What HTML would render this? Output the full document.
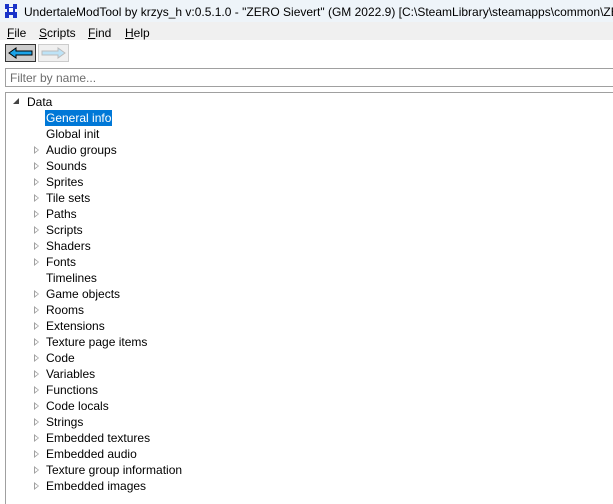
<!DOCTYPE html>
<html><head><style>
body{margin:0;width:613px;height:503px;overflow:hidden;background:#fff;font-family:"Liberation Sans",sans-serif;font-size:12px;color:#000;position:relative}
.abs{position:absolute}
#title{left:0;top:0;width:613px;height:22px;background:#eef4f9;overflow:hidden}
#title span{position:absolute;left:24px;top:5px;white-space:nowrap;font-size:12px}
#menu{left:0;top:22px;width:613px;height:18px;background:#f0f0f0}
#menu span{position:absolute;top:4px}
#filter{left:5px;top:68px;width:608px;height:17px;border:1px solid #a0a0a0;border-right:none;background:#fff;overflow:hidden}
#filter span{position:absolute;left:4px;top:2px;color:#6d6d6d}
#tree{left:5px;top:92px;width:608px;height:411px;border-left:1px solid #a0a0a0;border-top:1px solid #a0a0a0}
.row{position:absolute;left:46px;height:16px;line-height:16px;white-space:nowrap}
.arr{position:absolute;left:34px;width:0;height:0;border-left:5px solid #a0a0a0;border-top:4px solid transparent;border-bottom:4px solid transparent}
.arr:after{content:"";position:absolute;left:-4px;top:-2px;border-left:3px solid #fff;border-top:2px solid transparent;border-bottom:2px solid transparent}
</style></head><body>
<div id="title" class="abs">
<svg class="abs" style="left:4px;top:3px" width="14" height="16" viewBox="0 0 14 16"><path d="M1 1h4v3h4V1h4v5h-2v3h2v6H9v-3H5v3H1V9h2V6H1z" fill="#1a33c8"/><path d="M5 5h4v4H5z" fill="#fff"/></svg>
<span>UndertaleModTool by krzys_h v:0.5.1.0 - "ZERO Sievert" (GM 2022.9) [C:\SteamLibrary\steamapps\common\ZERO Sievert\data.win]</span></div>
<div id="menu" class="abs"><span style="left:7px"><u>F</u>ile</span><span style="left:39px"><u>S</u>cripts</span><span style="left:88px"><u>F</u>ind</span><span style="left:125px"><u>H</u>elp</span></div>
<div class="abs" style="left:5px;top:44px;width:29px;height:16px;background:#ccc;border:1px solid #333"></div>
<svg class="abs" style="left:8px;top:47px" width="26" height="12" viewBox="0 0 26 12"><path d="M1 6L8 1v3h16v4H8v3z" fill="#1aa3e8" stroke="#000" stroke-width="1"/></svg>
<div class="abs" style="left:38px;top:44px;width:29px;height:16px;background:#f0f0f0;border:1px solid #ccc"></div>
<svg class="abs" style="left:40px;top:47px" width="26" height="12" viewBox="0 0 26 12"><path d="M25 6L18 1v3H2v4h16v3z" fill="#bde3f7" stroke="#bbb" stroke-width="1"/></svg>
<div id="filter" class="abs"><span>Filter by name...</span></div>
<div id="tree" class="abs"></div>
<svg class="abs" style="left:12px;top:97px" width="8" height="8"><path d="M7 1V7H1z" fill="#444"/></svg>
<div class="row" style="left:27px;top:94px">Data</div>
<div class="row" style="top:110px;background:#0078d7;color:#fff;padding:0 1px;left:45px">General info</div>
<div class="row" style="top:126px">Global init</div>
<div id="items"></div>
<script>
var n=["Audio groups","Sounds","Sprites","Tile sets","Paths","Scripts","Shaders","Fonts","Timelines","Game objects","Rooms","Extensions","Texture page items","Code","Variables","Functions","Code locals","Strings","Embedded textures","Embedded audio","Texture group information","Embedded images"];
var h="";n.forEach(function(t,i){var y=142+16*i;h+='<div class="row" style="top:'+y+'px">'+t+'</div>';if(t!="Timelines")h+='<div class="arr" style="top:'+(y+4)+'px"></div>';});
document.getElementById("items").innerHTML=h;
</script>
</body></html>
